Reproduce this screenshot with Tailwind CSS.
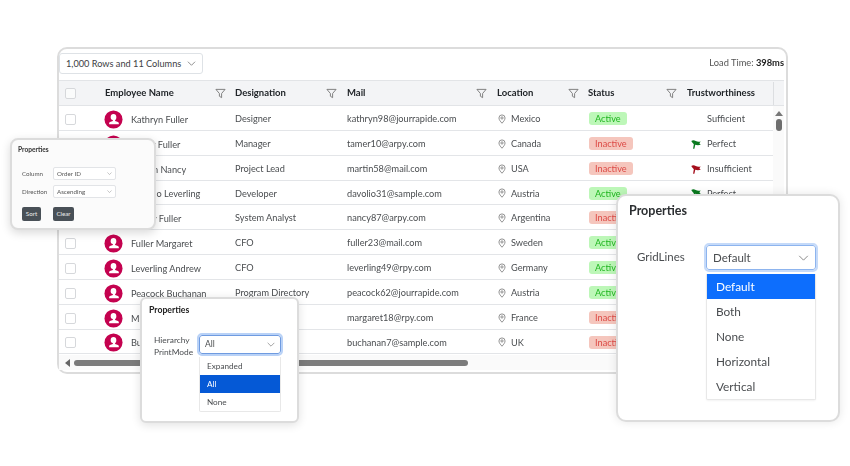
<!DOCTYPE html>
<html lang="en">
<head>
    <meta charset="UTF-8">
    <title>Grid Properties</title>
    <script src="https://cdn.jsdelivr.net/npm/@tailwindcss/browser@4"></script>
</head>
<body class="bg-white">
<svg class="hidden">
    <symbol id="filter" viewBox="0 0 12 12"><path d="M1 1.500h10L7.200 6v4.500L4.800 9V6z" fill="none" stroke="#777" stroke-width="1"/></symbol>
    <symbol id="user" viewBox="0 0 20 20"><circle cx="10" cy="10" r="9.500" fill="#c4024f"/><path d="M10 4.300c1.900 0 3 1.300 3 3.200 0 1.400-.5 2.400-1.300 3.100v1l3 1.100c.6.200.9.600.9 1.200v1H5.400v-1c0-.6.300-1 .9-1.200l3-1.100v-1C7.500 9.900 7 8.900 7 7.500c0-1.900 1.100-3.200 3-3.200z" fill="#fff"/></symbol>
    <symbol id="pin" viewBox="0 0 10 12"><path d="M5 11.300C3 9 1.200 7 1.200 4.700a3.800 3.800 0 0 1 7.600 0C8.800 7 7 9 5 11.300z" fill="none" stroke="#777" stroke-width="1"/><circle cx="5" cy="4.700" r="1.400" fill="none" stroke="#777" stroke-width="1"/></symbol>
    <symbol id="flag" viewBox="0 0 11 11"><path d="M.3 2.300C2 .8 3.600 1.300 5.200 2.200s3 1.100 5.500.6L9.200 4.700l1.500 1.600C8.300 7 6.300 6.800 4.700 6.300l-1 4.400H2.300l.8-5C1.800 4.700.8 3.500.3 2.300z" fill="currentColor"/></symbol>
    <symbol id="chev" viewBox="0 0 12 7"><path d="M1 1l5 5 5-5" fill="none" stroke="currentColor" stroke-width="1"/></symbol>
</svg>

<div class="relative w-[850px] h-[466px] overflow-hidden blur-[0.3px] font-['Lato','Noto_Sans',sans-serif] text-[#3c4043]">

    <!-- Main grid -->
    <div class="absolute left-[57px] top-[47px] w-[731px] h-[327px] border-2 border-[#dcdcdc] rounded-[10px] bg-white">
        <div class="flex justify-between items-start h-[31px] pr-[2px] pt-[4px]">
            <div class="flex items-center justify-between w-[144px] h-[21px] border border-[#dee2e6] rounded-[3px] px-[6px] text-[9.200px] whitespace-nowrap">
                <span>1,000 Rows and 11 Columns</span>
                <svg class="w-[9px] h-[5px] text-[#666]"><use href="#chev"/></svg>
            </div>
            <div class="text-[9.300px] text-[#555] pt-[2px] leading-[15px]">Load Time: <b class="text-[#222]">398ms</b></div>
        </div>

        <!-- Header -->
        <div class="grid grid-cols-[38px_130px_112px_150px_91px_99px_94px_11px] h-[26px] w-[725px] pt-[1px] bg-[#f3f4f6] border-y border-[#e2e4e7] text-[9.500px] font-bold text-[#212529] items-center">
            <div class="pl-[6px]"><span class="block w-[11px] h-[11px] border border-[#d6d8db] rounded-[2px] bg-white/60"></span></div>
            <div class="pl-[8px] pr-[1px] flex justify-between items-center">Employee Name<svg class="w-[11px] h-[11px]"><use href="#filter"/></svg></div>
            <div class="pl-[8px] pr-[2px] flex justify-between items-center">Designation<svg class="w-[11px] h-[11px]"><use href="#filter"/></svg></div>
            <div class="pl-[8px] pr-[2px] flex justify-between items-center">Mail<svg class="w-[11px] h-[11px]"><use href="#filter"/></svg></div>
            <div class="pl-[8px] pr-[1px] flex justify-between items-center">Location<svg class="w-[11px] h-[11px]"><use href="#filter"/></svg></div>
            <div class="pl-[8px] pr-[2px] flex justify-between items-center">Status<svg class="w-[11px] h-[11px]"><use href="#filter"/></svg></div>
            <div class="pl-[8px]">Trustworthiness</div>
            <div class="h-full border-l border-[#dcdee1]"></div>
        </div>

        <!-- Body -->
        <div class="flex w-[725px] h-[249px] overflow-hidden">
            <div class="w-[714px] text-[9.200px] text-[#4a4d50]">

                <div class="grid grid-cols-[38px_130px_112px_150px_91px_99px_94px] h-[25px] pt-[2px] border-b border-[#e3e5e8] items-center">
                    <div class="pl-[6px]"><span class="block w-[11px] h-[11px] border border-[#d6d8db] rounded-[2px]"></span></div>
                    <div class="pl-[7px] flex items-center gap-[8px]"><svg class="w-[19px] h-[19px] shrink-0"><use href="#user"/></svg><span class="pt-[1px]">Kathryn Fuller</span></div>
                    <div class="pl-[8px]">Designer</div>
                    <div class="pl-[8px]">kathryn98@jourrapide.com</div>
                    <div class="pl-[9px] flex items-center gap-[5px]"><svg class="w-[8px] h-[10px]"><use href="#pin"/></svg>Mexico</div>
                    <div class="pl-[9px]"><span class="inline-block px-[6px] leading-[13px] rounded-[3px] bg-[#bdf7b8] text-[#1fb51f]">Active</span></div>
                    <div class="pl-[28px]">Sufficient</div>
                </div>

                <div class="grid grid-cols-[38px_130px_112px_150px_91px_99px_94px] h-[25px] pt-[2px] border-b border-[#e3e5e8] items-center">
                    <div class="pl-[6px]"><span class="block w-[11px] h-[11px] border border-[#d6d8db] rounded-[2px]"></span></div>
                    <div class="pl-[7px] flex items-center gap-[8px]"><svg class="w-[19px] h-[19px] shrink-0"><use href="#user"/></svg><span class="pt-[1px]">Tamer Fuller</span></div>
                    <div class="pl-[8px]">Manager</div>
                    <div class="pl-[8px]">tamer10@arpy.com</div>
                    <div class="pl-[9px] flex items-center gap-[5px]"><svg class="w-[8px] h-[10px]"><use href="#pin"/></svg>Canada</div>
                    <div class="pl-[9px]"><span class="inline-block px-[6px] leading-[13px] rounded-[3px] bg-[#f5c6bd] text-[#dc4a45]">Inactive</span></div>
                    <div class="pl-[12px] flex items-center gap-[6px]"><svg class="w-[10px] h-[10px] text-[#0a7a1f]"><use href="#flag"/></svg>Perfect</div>
                </div>

                <div class="grid grid-cols-[38px_130px_112px_150px_91px_99px_94px] h-[25px] pt-[2px] border-b border-[#e3e5e8] items-center">
                    <div class="pl-[6px]"><span class="block w-[11px] h-[11px] border border-[#d6d8db] rounded-[2px]"></span></div>
                    <div class="pl-[7px] flex items-center gap-[8px]"><svg class="w-[19px] h-[19px] shrink-0"><use href="#user"/></svg><span class="pt-[1px]">Martin Nancy</span></div>
                    <div class="pl-[8px]">Project Lead</div>
                    <div class="pl-[8px]">martin58@mail.com</div>
                    <div class="pl-[9px] flex items-center gap-[5px]"><svg class="w-[8px] h-[10px]"><use href="#pin"/></svg>USA</div>
                    <div class="pl-[9px]"><span class="inline-block px-[6px] leading-[13px] rounded-[3px] bg-[#f5c6bd] text-[#dc4a45]">Inactive</span></div>
                    <div class="pl-[12px] flex items-center gap-[6px]"><svg class="w-[10px] h-[10px] text-[#a50e1c]"><use href="#flag"/></svg>Insufficient</div>
                </div>

                <div class="grid grid-cols-[38px_130px_112px_150px_91px_99px_94px] h-[24px] pt-[2px] border-b border-[#e3e5e8] items-center">
                    <div class="pl-[6px]"><span class="block w-[11px] h-[11px] border border-[#d6d8db] rounded-[2px]"></span></div>
                    <div class="pl-[7px] flex items-center gap-[8px]"><svg class="w-[19px] h-[19px] shrink-0"><use href="#user"/></svg><span class="pt-[1px]">Davolio Leverling</span></div>
                    <div class="pl-[8px]">Developer</div>
                    <div class="pl-[8px]">davolio31@sample.com</div>
                    <div class="pl-[9px] flex items-center gap-[5px]"><svg class="w-[8px] h-[10px]"><use href="#pin"/></svg>Austria</div>
                    <div class="pl-[9px]"><span class="inline-block px-[6px] leading-[13px] rounded-[3px] bg-[#bdf7b8] text-[#1fb51f]">Active</span></div>
                    <div class="pl-[12px] flex items-center gap-[6px]"><svg class="w-[10px] h-[10px] text-[#0a7a1f]"><use href="#flag"/></svg>Perfect</div>
                </div>

                <div class="grid grid-cols-[38px_130px_112px_150px_91px_99px_94px] h-[25px] pt-[2px] border-b border-[#e3e5e8] items-center">
                    <div class="pl-[6px]"><span class="block w-[11px] h-[11px] border border-[#d6d8db] rounded-[2px]"></span></div>
                    <div class="pl-[7px] flex items-center gap-[8px]"><svg class="w-[19px] h-[19px] shrink-0"><use href="#user"/></svg><span class="pt-[1px]">Nancy Fuller</span></div>
                    <div class="pl-[8px]">System Analyst</div>
                    <div class="pl-[8px]">nancy87@arpy.com</div>
                    <div class="pl-[9px] flex items-center gap-[5px]"><svg class="w-[8px] h-[10px]"><use href="#pin"/></svg>Argentina</div>
                    <div class="pl-[9px]"><span class="inline-block px-[6px] leading-[13px] rounded-[3px] bg-[#f5c6bd] text-[#dc4a45]">Inactive</span></div>
                    <div></div>
                </div>

                <div class="grid grid-cols-[38px_130px_112px_150px_91px_99px_94px] h-[25px] pt-[2px] border-b border-[#e3e5e8] items-center">
                    <div class="pl-[6px]"><span class="block w-[11px] h-[11px] border border-[#d6d8db] rounded-[2px]"></span></div>
                    <div class="pl-[7px] flex items-center gap-[8px]"><svg class="w-[19px] h-[19px] shrink-0"><use href="#user"/></svg><span class="pt-[1px]">Fuller Margaret</span></div>
                    <div class="pl-[8px]">CFO</div>
                    <div class="pl-[8px]">fuller23@mail.com</div>
                    <div class="pl-[9px] flex items-center gap-[5px]"><svg class="w-[8px] h-[10px]"><use href="#pin"/></svg>Sweden</div>
                    <div class="pl-[9px]"><span class="inline-block px-[6px] leading-[13px] rounded-[3px] bg-[#bdf7b8] text-[#1fb51f]">Active</span></div>
                    <div></div>
                </div>

                <div class="grid grid-cols-[38px_130px_112px_150px_91px_99px_94px] h-[25px] pt-[2px] border-b border-[#e3e5e8] items-center">
                    <div class="pl-[6px]"><span class="block w-[11px] h-[11px] border border-[#d6d8db] rounded-[2px]"></span></div>
                    <div class="pl-[7px] flex items-center gap-[8px]"><svg class="w-[19px] h-[19px] shrink-0"><use href="#user"/></svg><span class="pt-[1px]">Leverling Andrew</span></div>
                    <div class="pl-[8px]">CFO</div>
                    <div class="pl-[8px]">leverling49@rpy.com</div>
                    <div class="pl-[9px] flex items-center gap-[5px]"><svg class="w-[8px] h-[10px]"><use href="#pin"/></svg>Germany</div>
                    <div class="pl-[9px]"><span class="inline-block px-[6px] leading-[13px] rounded-[3px] bg-[#bdf7b8] text-[#1fb51f]">Active</span></div>
                    <div></div>
                </div>

                <div class="grid grid-cols-[38px_130px_112px_150px_91px_99px_94px] h-[25px] pt-[2px] border-b border-[#e3e5e8] items-center">
                    <div class="pl-[6px]"><span class="block w-[11px] h-[11px] border border-[#d6d8db] rounded-[2px]"></span></div>
                    <div class="pl-[7px] flex items-center gap-[8px]"><svg class="w-[19px] h-[19px] shrink-0"><use href="#user"/></svg><span class="pt-[1px]">Peacock Buchanan</span></div>
                    <div class="pl-[8px]">Program Directory</div>
                    <div class="pl-[8px]">peacock62@jourrapide.com</div>
                    <div class="pl-[9px] flex items-center gap-[5px]"><svg class="w-[8px] h-[10px]"><use href="#pin"/></svg>Austria</div>
                    <div class="pl-[9px]"><span class="inline-block px-[6px] leading-[13px] rounded-[3px] bg-[#bdf7b8] text-[#1fb51f]">Active</span></div>
                    <div></div>
                </div>

                <div class="grid grid-cols-[38px_130px_112px_150px_91px_99px_94px] h-[25px] pt-[2px] border-b border-[#e3e5e8] items-center">
                    <div class="pl-[6px]"><span class="block w-[11px] h-[11px] border border-[#d6d8db] rounded-[2px]"></span></div>
                    <div class="pl-[7px] flex items-center gap-[8px]"><svg class="w-[19px] h-[19px] shrink-0"><use href="#user"/></svg><span class="pt-[1px]">M</span></div>
                    <div></div>
                    <div class="pl-[8px]">margaret18@rpy.com</div>
                    <div class="pl-[9px] flex items-center gap-[5px]"><svg class="w-[8px] h-[10px]"><use href="#pin"/></svg>France</div>
                    <div class="pl-[9px]"><span class="inline-block px-[6px] leading-[13px] rounded-[3px] bg-[#f5c6bd] text-[#dc4a45]">Inactive</span></div>
                    <div></div>
                </div>

                <div class="grid grid-cols-[38px_130px_112px_150px_91px_99px_94px] h-[24px] pt-[2px] border-b border-[#e3e5e8] items-center">
                    <div class="pl-[6px]"><span class="block w-[11px] h-[11px] border border-[#d6d8db] rounded-[2px]"></span></div>
                    <div class="pl-[7px] flex items-center gap-[8px]"><svg class="w-[19px] h-[19px] shrink-0"><use href="#user"/></svg><span class="pt-[1px]">Bu</span></div>
                    <div></div>
                    <div class="pl-[8px]">buchanan7@sample.com</div>
                    <div class="pl-[9px] flex items-center gap-[5px]"><svg class="w-[8px] h-[10px]"><use href="#pin"/></svg>UK</div>
                    <div class="pl-[9px]"><span class="inline-block px-[6px] leading-[13px] rounded-[3px] bg-[#f5c6bd] text-[#dc4a45]">Inactive</span></div>
                    <div></div>
                </div>
            </div>

            <!-- Vertical scrollbar -->
            <div class="w-[11px] bg-[#fafafa] flex flex-col items-center pt-[5px] gap-[3px]">
                <span class="w-0 h-0 border-x-[4px] border-x-transparent border-b-[5px] border-b-[#777]"></span>
                <span class="w-[6px] h-[12px] rounded-[3px] bg-[#6e6e6e]"></span>
            </div>
        </div>

        <!-- Horizontal scrollbar -->
        <div class="flex items-center w-[725px] h-[15px] bg-[#fafafa] pl-[6px] gap-[4px]">
            <span class="w-0 h-0 border-y-[4px] border-y-transparent border-r-[5px] border-r-[#666]"></span>
            <span class="w-[394px] h-[6px] rounded-[3px] bg-[#7a7a7a]"></span>
        </div>
    </div>

    <!-- Sort properties popup -->
    <div class="absolute left-[10px] top-[138px] w-[146px] h-[92px] border-2 border-[#dcdcdc] rounded-[8px] bg-[#fbfbfb] shadow-[0_3px_10px_rgba(0,0,0,0.15)] pl-[6px] pt-[3px] text-[6.200px] text-[#555]">
        <div class="text-[6.600px] font-bold text-[#333] leading-[10px] mt-[1px]">Properties</div>
        <div class="grid grid-cols-[31px_63px] gap-y-[5px] items-center ml-[4px] mt-[13px]">
            <span>Column</span>
            <div class="flex items-center justify-between h-[13px] border border-[#e2e4e7] rounded-[2px] px-[3px] bg-white">Order ID<svg class="w-[5px] h-[3px] text-[#777]"><use href="#chev"/></svg></div>
            <span>Direction</span>
            <div class="flex items-center justify-between h-[13px] border border-[#e2e4e7] rounded-[2px] px-[3px] bg-white">Ascending<svg class="w-[5px] h-[3px] text-[#777]"><use href="#chev"/></svg></div>
        </div>
        <div class="flex ml-[4px] mt-[9px]">
            <span class="w-[19px] h-[14px] rounded-[2px] bg-[#495057] text-white/90 flex items-center justify-center">Sort</span>
            <span class="w-[21px] h-[14px] rounded-[2px] bg-[#495057] text-white/90 flex items-center justify-center ml-[12px]">Clear</span>
        </div>
    </div>

    <!-- Hierarchy print mode popup -->
    <div class="absolute left-[140px] top-[297px] w-[159px] h-[126px] border-2 border-[#dcdcdc] rounded-[6px] bg-white shadow-[0_2px_10px_rgba(0,0,0,0.12)] pl-[7px] text-[#4a4d50]">
        <div class="text-[8.700px] font-bold text-[#222] mt-[5px] leading-[12px]">Properties</div>
        <div class="flex mt-[19px] ml-[5px]">
            <div class="w-[45px] text-[8.400px] leading-[12px] mt-[-1px]">Hierarchy<br>PrintMode</div>
            <div class="w-[82px]">
                <div class="flex items-center justify-between h-[19px] border border-[#6f9be0] rounded-[3px] outline-[2px] outline-[#b9d2f7] px-[5px] text-[8.500px] bg-white">All<svg class="w-[8px] h-[5px] text-[#777]"><use href="#chev"/></svg></div>
                <div class="mt-[3px] border-x border-b border-[#e8e8e8] rounded-b-[2px] text-[8.200px] bg-white">
                    <div class="h-[18px] flex items-center pl-[7px]">Expanded</div>
                    <div class="h-[18px] flex items-center pl-[7px] bg-[#0559d6] text-white">All</div>
                    <div class="h-[18px] flex items-center pl-[7px]">None</div>
                </div>
            </div>
        </div>
    </div>

    <!-- Grid lines popup -->
    <div class="absolute left-[616px] top-[194px] w-[224px] h-[228px] border-2 border-[#dcdcdc] rounded-[10px] bg-white shadow-[0_0_10px_rgba(0,0,0,0.1)] text-[#4a4d50]">
        <div class="text-[12.500px] font-bold text-[#2b2e31] mt-[7px] ml-[11px] leading-[16px]">Properties</div>
        <div class="flex mt-[26px] ml-[19px]">
            <div class="w-[69px] text-[11.500px] pt-[3px]">GridLines</div>
            <div class="w-[110px]">
                <div class="flex items-center justify-between h-[25px] border border-[#8db4ee] rounded-[3px] outline-[2px] outline-[#c5daf9] px-[6px] text-[11.500px] bg-white">Default<svg class="w-[11px] h-[6px] text-[#777]"><use href="#chev"/></svg></div>
                <div class="mt-[4px] border-x border-b border-[#e8e8e8] rounded-b-[2px] text-[11.800px] shadow-[0_1px_2px_rgba(0,0,0,0.05)] bg-white">
                    <div class="h-[25px] flex items-center pl-[9px] bg-[#0d6efd] text-white">Default</div>
                    <div class="h-[25px] flex items-center pl-[9px]">Both</div>
                    <div class="h-[25px] flex items-center pl-[9px]">None</div>
                    <div class="h-[25px] flex items-center pl-[9px]">Horizontal</div>
                    <div class="h-[25px] flex items-center pl-[9px]">Vertical</div>
                </div>
            </div>
        </div>
    </div>

</div>
</body>
</html>
